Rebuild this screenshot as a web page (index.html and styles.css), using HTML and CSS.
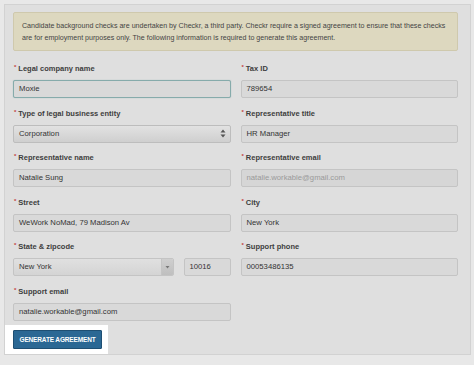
FILE: index.html
```html
<!DOCTYPE html>
<html lang="en">
<head>
  <meta charset="UTF-8" />
  <title>Checkr agreement</title>
  <link rel="stylesheet" href="styles.css">
</head>
<body>
  <div class="panel">
    <div class="notice">
      Candidate background checks are undertaken by Checkr, a third party. Checkr require a signed agreement to ensure that these checks<br>
      are for employment purposes only. The following information is required to generate this agreement.
    </div>

    <form class="grid">
      <div class="field">
        <label><span class="req">*</span>Legal company name</label>
        <div class="input focus">Moxie</div>
      </div>
      <div class="field">
        <label><span class="req">*</span>Tax ID</label>
        <div class="input">789654</div>
      </div>

      <div class="field">
        <label><span class="req">*</span>Type of legal business entity</label>
        <div class="input select">
          <span>Corporation</span>
          <svg width="6" height="9" viewBox="0 0 6 9"><path d="M3 0.5L5.5 3.5H0.5Z M3 8.5L5.5 5.5H0.5Z" fill="#555"/></svg>
        </div>
      </div>
      <div class="field">
        <label><span class="req">*</span>Representative title</label>
        <div class="input">HR Manager</div>
      </div>

      <div class="field">
        <label><span class="req">*</span>Representative name</label>
        <div class="input">Natalie Sung</div>
      </div>
      <div class="field">
        <label><span class="req">*</span>Representative email</label>
        <div class="input disabled">natalie.workable@gmail.com</div>
      </div>

      <div class="field">
        <label><span class="req">*</span>Street</label>
        <div class="input">WeWork NoMad, 79 Madison Av</div>
      </div>
      <div class="field">
        <label><span class="req">*</span>City</label>
        <div class="input">New York</div>
      </div>

      <div class="field">
        <label><span class="req">*</span>State &amp; zipcode</label>
        <div class="split">
          <div class="input state">
            <span class="state-text">New York</span>
            <span class="caret"><svg width="5" height="4" viewBox="0 0 5 4"><path d="M0.5 1H4.5L2.5 3.5Z" fill="#777"/></svg></span>
          </div>
          <div class="input zip">10016</div>
        </div>
      </div>
      <div class="field">
        <label><span class="req">*</span>Support phone</label>
        <div class="input">00053486135</div>
      </div>

      <div class="field">
        <label><span class="req">*</span>Support email</label>
        <div class="input">natalie.workable@gmail.com</div>
      </div>
    </form>

    <div class="actions">
      <button type="button">GENERATE AGREEMENT</button>
    </div>
  </div>
</body>
</html>
```

FILE: styles.css
```css
body {
  margin: 0;
  background-color: #e8e8e8;
  font-family: "Liberation Sans", Arial, sans-serif;
  color: #3a3a3a;
}

.panel {
  margin: 4px 3px 2px 4px;
  height: 351px;
  box-sizing: border-box;
  background-color: #dfdfdf;
  border: 1px solid #d2d2d2;
  padding: 7px 12px 0 8px;
}

.notice {
  background-color: #ddd8bf;
  border: 1px solid #cfc9ad;
  border-radius: 2px;
  padding: 7px 8px 6px 8px;
  font-size: 7.1px;
  line-height: 12px;
  color: #444;
  margin-bottom: 12px;
}

.grid {
  display: grid;
  grid-template-columns: 1fr 1fr;
  column-gap: 10px;
  row-gap: 9.6px;
  margin: 0;
}

label {
  display: block;
  height: 12px;
  font-size: 7.5px;
  font-weight: bold;
  line-height: 12px;
  color: #3d3d3d;
  margin-bottom: 5px;
}

.req {
  color: #c23b3b;
  font-size: 6px;
  line-height: 0;
  vertical-align: 2px;
  margin-right: 2px;
  margin-left: 1px;
}

.input {
  height: 18px;
  box-sizing: border-box;
  background-color: #d9d9d9;
  border: 1px solid #c4c4c4;
  border-radius: 2px;
  padding: 0 5px;
  font-size: 7.7px;
  line-height: 16px;
  color: #333;
  white-space: nowrap;
  overflow: hidden;
}

.input.focus {
  border-color: #86abab;
  box-shadow: 0 0 1px rgba(90, 150, 150, 0.6);
}

.input.disabled {
  color: #9a9a9a;
  background-color: #d6d6d6;
}

.select {
  display: flex;
  align-items: center;
  justify-content: space-between;
  background: linear-gradient(#e2e2e2, #cfcfcf);
  border-color: #bdbdbd;
  padding-right: 4px;
}

.split {
  display: flex;
  gap: 10px;
}

.state {
  flex: 1;
  display: flex;
  padding-right: 0;
  background: linear-gradient(#e0e0e0, #d4d4d4);
}

.state-text {
  flex: 1;
}

.caret {
  width: 12px;
  margin-right: -1px;
  background: linear-gradient(#cfcfcf, #bfbfbf);
  border-left: 1px solid #c4c4c4;
  display: flex;
  align-items: center;
  justify-content: center;
}

.zip {
  width: 47px;
}

.actions {
  display: inline-block;
  background-color: #ffffff;
  margin: 4px 0 0 -8px;
  padding: 5px 6px 5px 8px;
}

button {
  display: block;
  width: 89px;
  height: 19px;
  padding: 0;
  background-color: #2b6894;
  border: 1px solid #1e4f73;
  border-radius: 1px;
  color: #ffffff;
  font-family: "Liberation Sans", Arial, sans-serif;
  font-size: 6.5px;
  font-weight: bold;
  letter-spacing: -0.15px;
}
```
